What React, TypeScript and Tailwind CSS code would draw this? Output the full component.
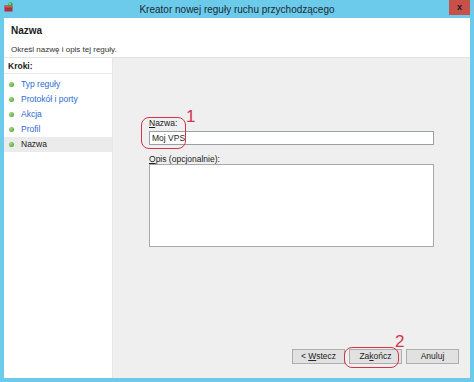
const steps = [
  { label: "Typ reguły", done: true },
  { label: "Protokół i porty", done: true },
  { label: "Akcja", done: true },
  { label: "Profil", done: true },
  { label: "Nazwa", done: false },
];

function Dot() {
  return <span className="h-[5px] w-[5px] shrink-0 rounded-full bg-[radial-gradient(circle_at_35%_35%,#9be07a,#3f9a2a)]" />;
}

function AppIcon() {
  return (
    <svg width="10" height="10" viewBox="0 0 10 10">
      <rect x="0.5" y="3.5" width="8" height="6" fill="#b0303a" />
      <rect x="0.5" y="3.5" width="8" height="2" fill="#d8505a" />
      <circle cx="6.5" cy="2.5" r="2.2" fill="#3fa648" />
      <circle cx="6" cy="2" r="0.9" fill="#8fe08c" />
    </svg>
  );
}

function WinButton({ children, ul }: { children: string; ul: number }) {
  return (
    <button className="flex h-[15px] w-[53px] items-center justify-center whitespace-pre border border-[#adadad] bg-[#e1e1e1] text-[8.5px] text-[#222]">
      {children.slice(0, ul)}
      <span className="underline">{children[ul]}</span>
      {children.slice(ul + 1)}
    </button>
  );
}

export default function App() {
  return (
    <div className="flex h-[382px] w-[474px] flex-col bg-[#6ccbeb] font-['Liberation_Sans',Arial,sans-serif] text-[#1b1b1b]">
      {/* title bar */}
      <div className="relative flex h-[18px] shrink-0 items-center justify-center">
        <div className="absolute left-[4px] top-[2px]"><AppIcon /></div>
        <span className="text-[10px] text-[#1d2a33]">Kreator nowej reguły ruchu przychodzącego</span>
        <div className="absolute right-[4px] top-0 flex h-[15px] w-[21px] items-center justify-center bg-[#c7504b] text-[9px] font-bold text-[#1a1a1a]">
          x
        </div>
      </div>

      <div className="mx-[4px] mb-[4px] flex flex-1 flex-col bg-white">
        {/* header */}
        <div className="flex h-[40px] shrink-0 flex-col border-b border-[#e3e3e3] px-[7px] pt-[5px]">
          <span className="text-[10px] font-bold">Nazwa</span>
          <span className="mt-[6px] text-[8px] text-[#333]">Określ nazwę i opis tej reguły.</span>
        </div>

        <div className="flex flex-1">
          {/* steps */}
          <div className="w-[108px] shrink-0 bg-white">
            <div className="flex h-[16px] items-center border-b border-[#eaeaea] px-[4px] pt-[2px] text-[8.5px] font-bold">Kroki:</div>
            <div className="mt-[3px] flex flex-col">
              {steps.map((s) => (
                <div
                  key={s.label}
                  className={`flex h-[15px] items-center gap-[7px] pl-[5px] text-[8.5px] ${s.done ? "text-[#2d6bd1]" : "bg-[#ebebeb] text-[#1b1b1b]"}`}
                >
                  <Dot />
                  {s.label}
                </div>
              ))}
            </div>
          </div>

          {/* form */}
          <div className="relative flex flex-1 flex-col border-l border-[#e6e6e6] bg-[#efefef] px-[36px] pt-[60px]">
            <label className="text-[8.5px] leading-[10px]"><span className="underline">N</span>azwa:</label>
            <div className="mt-[3px] flex h-[14px] items-center border border-[#9a9fa6] bg-white px-[2px] text-[8.5px]">Moj VPS</div>
            <label className="mt-[9px] text-[8.5px] leading-[10px]"><span className="underline">O</span>pis (opcjonalnie):</label>
            <div className="mt-0 h-[83px] border border-[#a9a9a9] bg-white" />

            <div className="mt-auto mb-[14px] -mr-[25px] flex justify-end gap-[4px]">
              <WinButton ul={2}>{"< Wstecz"}</WinButton>
              <WinButton ul={2}>Zakończ</WinButton>
              <WinButton ul={99}>Anuluj</WinButton>
            </div>

            {/* annotations */}
            <div className="absolute left-[28px] top-[59px] h-[32px] w-[45px] rounded-[8px] border-[1.5px] border-[#d3334b]" />
            <span className="absolute left-[73px] top-[50px] text-[17px] leading-none text-[#d3334b]">1</span>
            <div className="absolute left-[231px] top-[289px] h-[21px] w-[55px] rounded-[8px] border-[1.5px] border-[#d3334b]" />
            <span className="absolute left-[282px] top-[275px] text-[17px] leading-none text-[#d3334b]">2</span>
          </div>
        </div>
      </div>
    </div>
  );
}
